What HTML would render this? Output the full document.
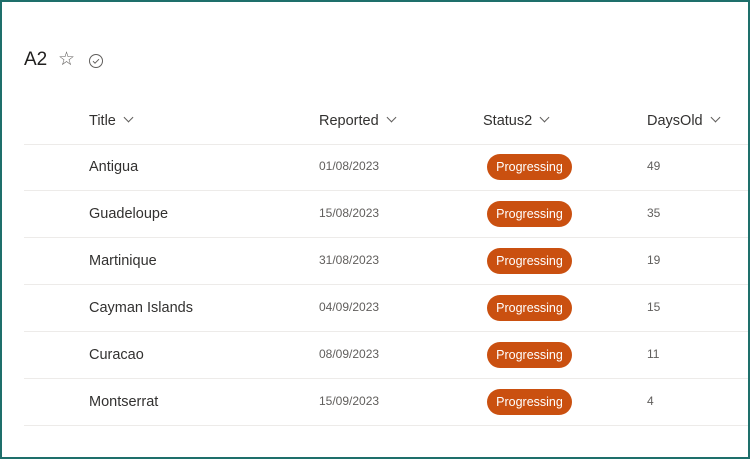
<!DOCTYPE html>
<html><head><style>
*{margin:0;padding:0;box-sizing:border-box}
body{width:750px;height:459px;background:#fff;font-family:"Liberation Sans",sans-serif;position:relative;overflow:hidden}
.frame{position:absolute;left:0;top:0;width:750px;height:459px;border:2px solid #1e6f6b}
.a{position:absolute;white-space:nowrap}
.h{font-size:14.5px;color:#323130;top:113px}
.chev{display:inline-block;width:7px;height:7px;border-right:1px solid #605e5c;border-bottom:1px solid #605e5c;transform:rotate(45deg);margin-left:9px;position:relative;top:-4px}
.line{position:absolute;left:24px;right:2px;height:1px;background:#edebe9}
.t{font-size:14.5px;color:#323130;left:89px}
.d{font-size:12px;color:#605e5c;left:319px}
.n{font-size:12px;color:#605e5c;left:647px}
.p{left:487px;width:85px;height:26px;border-radius:13px;background:#ca5010;color:#fff;font-size:12.5px;text-align:center;line-height:26px}
</style></head><body>
<div class="frame"></div>
<div class="a" style="left:24px;top:49px;font-size:19px;color:#201f1e">A2</div>
<div class="a" style="left:58px;top:48px;font-size:19px;color:#605e5c">☆</div>
<svg class="a" style="left:88px;top:53px" width="16" height="16" viewBox="0 0 16 16"><circle cx="8" cy="8" r="6.5" fill="none" stroke="#605e5c" stroke-width="1"/><path d="M5 8.2l2 2 4-4" fill="none" stroke="#605e5c" stroke-width="1"/></svg>
<div class="a h" style="left:89px">Title<span class="chev"></span></div>
<div class="a h" style="left:319px">Reported<span class="chev"></span></div>
<div class="a h" style="left:483px">Status2<span class="chev"></span></div>
<div class="a h" style="left:647px">DaysOld<span class="chev"></span></div>
<div class="line" style="top:144px"></div>
<div class="line" style="top:190px"></div>
<div class="line" style="top:237px"></div>
<div class="line" style="top:284px"></div>
<div class="line" style="top:331px"></div>
<div class="line" style="top:378px"></div>
<div class="line" style="top:425px"></div>

<div class="a t" style="top:159px">Antigua</div><div class="a d" style="top:159px">01/08/2023</div><div class="a p" style="top:154px">Progressing</div><div class="a n" style="top:159px">49</div>
<div class="a t" style="top:206px">Guadeloupe</div><div class="a d" style="top:206px">15/08/2023</div><div class="a p" style="top:201px">Progressing</div><div class="a n" style="top:206px">35</div>
<div class="a t" style="top:253px">Martinique</div><div class="a d" style="top:253px">31/08/2023</div><div class="a p" style="top:248px">Progressing</div><div class="a n" style="top:253px">19</div>
<div class="a t" style="top:300px">Cayman Islands</div><div class="a d" style="top:300px">04/09/2023</div><div class="a p" style="top:295px">Progressing</div><div class="a n" style="top:300px">15</div>
<div class="a t" style="top:347px">Curacao</div><div class="a d" style="top:347px">08/09/2023</div><div class="a p" style="top:342px">Progressing</div><div class="a n" style="top:347px">11</div>
<div class="a t" style="top:394px">Montserrat</div><div class="a d" style="top:394px">15/09/2023</div><div class="a p" style="top:389px">Progressing</div><div class="a n" style="top:394px">4</div>
</body></html>
